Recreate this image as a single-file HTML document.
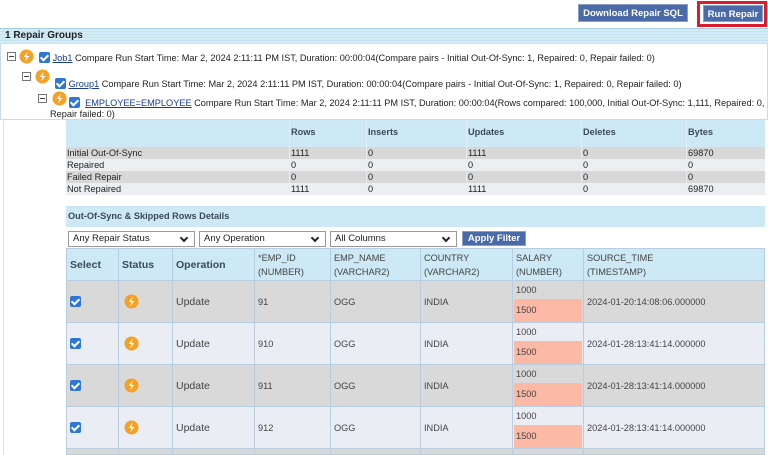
<!DOCTYPE html>
<html><head><meta charset="utf-8">
<style>
*{box-sizing:border-box;margin:0;padding:0}
body{width:768px;height:455px;background:#fff;font-family:"Liberation Sans",Tahoma,sans-serif;font-size:9.2px;color:#222;position:relative;overflow:hidden}
.a{position:absolute;white-space:nowrap}
.btn{position:absolute;background:#4a6aa8;color:#fff;font-weight:bold;font-size:9.5px;text-align:center;line-height:17px;border:1px solid #8aa0c8}
.band{position:absolute;background:repeating-linear-gradient(#d4ecf6 0 2px,#c4e2f0 2px 3px)}
a{color:#1a3c8c;text-decoration:underline}
.cb{display:inline-block;width:11px;height:11px;background:#2f77d6;border-radius:2px;position:relative;vertical-align:-2px}
.cb:after{content:"";position:absolute;left:3px;top:1px;width:3px;height:6px;border:solid #fff;border-width:0 2px 2px 0;transform:rotate(45deg)}
.pm{position:absolute;width:9px;height:9px;border:1px solid #777;background:#fff}
.pm:after{content:"";position:absolute;left:1px;top:3px;width:5px;height:1px;background:#444}
table{border-collapse:collapse}
.g td{border:1px solid #b8cde0;padding:0 3px;font-size:9.2px;color:#444;vertical-align:middle}
.sel{position:absolute;height:16px;border:1px solid #999;background:#fff;font-size:9.5px;line-height:14px;padding-left:4px}
.sel:after{content:"";position:absolute;right:7px;top:3px;width:4px;height:4px;border:solid #222;border-width:0 2px 2px 0;transform:rotate(45deg)}
</style></head><body>
<svg width="0" height="0" style="position:absolute"><defs><symbol id="ic" viewBox="0 0 16 16"><circle cx="8" cy="8" r="7.5" fill="#f4a124"/><path d="M9.5 2.5 L5 8.5 H8 L6.5 13.5 L11 7.5 H8 Z" fill="#fff"/></symbol></defs></svg>

<div class="btn" style="left:578px;top:4px;width:110px;height:18px">Download Repair SQL</div>
<div class="a" style="left:697px;top:1px;width:70px;height:26px;border:3px solid #d81e2c"></div>
<div class="btn" style="left:703px;top:5px;width:60px;height:17px">Run Repair</div>

<div class="band" style="left:0;top:28px;width:768px;height:16px;border-top:1px solid #a9cde0"></div>
<div class="a" style="left:5px;top:30px;font-weight:bold;font-size:10px">1 Repair Groups</div>
<div class="a" style="left:0;top:44px;width:768px;height:76px;border:1px solid #c8dbe8;border-top:none"></div>
<div class="a" style="left:3px;top:120px;width:1px;height:335px;background:#e2e2e2"></div>

<div class="pm" style="left:7px;top:52px"></div>
<svg class="a" style="left:19px;top:49px" width="15" height="15"><use href="#ic"/></svg>
<div class="a" style="left:39px;top:52px"><span class="cb"></span> <a>Job1</a> Compare Run Start Time: Mar 2, 2024 2:11:11 PM IST, Duration: 00:00:04(Compare pairs - Initial Out-Of-Sync: 1, Repaired: 0, Repair failed: 0)</div>

<div class="pm" style="left:22px;top:72px"></div>
<svg class="a" style="left:35px;top:69px" width="15" height="15"><use href="#ic"/></svg>
<div class="a" style="left:55px;top:78px"><span class="cb"></span> <a>Group1</a> Compare Run Start Time: Mar 2, 2024 2:11:11 PM IST, Duration: 00:00:04(Compare pairs - Initial Out-Of-Sync: 1, Repaired: 0, Repair failed: 0)</div>

<div class="pm" style="left:38px;top:94px"></div>
<svg class="a" style="left:52px;top:91px" width="15" height="15"><use href="#ic"/></svg>
<div class="a" style="left:69px;top:97px"><span class="cb"></span> &nbsp;<a>EMPLOYEE=EMPLOYEE</a> Compare Run Start Time: Mar 2, 2024 2:11:11 PM IST, Duration: 00:00:04(Rows compared: 100,000, Initial Out-Of-Sync: 1,111, Repaired: 0,</div>
<div class="a" style="left:50px;top:109px">Repair failed: 0)</div>

<div class="a" style="left:66px;top:120px;width:699px;height:27px;background:#cde9f5"></div>
<div class="a" style="left:66px;top:147px;width:699px;height:48px;border-bottom:1px solid #ddd"></div>
<div class="a" style="left:66px;top:147px;width:699px;height:12px;background:#d8d8d8"></div>
<div class="a" style="left:66px;top:159px;width:699px;height:12px;background:#eceef2"></div>
<div class="a" style="left:66px;top:171px;width:699px;height:12px;background:#d8d8d8"></div>
<div class="a" style="left:66px;top:183px;width:699px;height:12px;background:#eceef2"></div>
<div class="a" style="left:289px;top:120px;width:1px;height:75px;background:#e6eef4"></div>
<div class="a" style="left:366px;top:120px;width:1px;height:75px;background:#e6eef4"></div>
<div class="a" style="left:466px;top:120px;width:1px;height:75px;background:#e6eef4"></div>
<div class="a" style="left:581px;top:120px;width:1px;height:75px;background:#e6eef4"></div>
<div class="a" style="left:686px;top:120px;width:1px;height:75px;background:#e6eef4"></div>
<div class="a" style="left:291px;top:127px;font-weight:bold;color:#3a4a5a">Rows</div>
<div class="a" style="left:368px;top:127px;font-weight:bold;color:#3a4a5a">Inserts</div>
<div class="a" style="left:468px;top:127px;font-weight:bold;color:#3a4a5a">Updates</div>
<div class="a" style="left:583px;top:127px;font-weight:bold;color:#3a4a5a">Deletes</div>
<div class="a" style="left:688px;top:127px;font-weight:bold;color:#3a4a5a">Bytes</div>
<div class="a" style="left:67px;top:147px;line-height:12px">Initial Out-Of-Sync<br>Repaired<br>Failed Repair<br>Not Repaired</div>
<div class="a" style="left:291px;top:147px;line-height:12px">1111<br>0<br>0<br>1111</div>
<div class="a" style="left:368px;top:147px;line-height:12px">0<br>0<br>0<br>0</div>
<div class="a" style="left:468px;top:147px;line-height:12px">1111<br>0<br>0<br>1111</div>
<div class="a" style="left:583px;top:147px;line-height:12px">0<br>0<br>0<br>0</div>
<div class="a" style="left:688px;top:147px;line-height:12px">69870<br>0<br>0<br>69870</div>

<div class="a" style="left:66px;top:206px;width:699px;height:21px;background:#cde9f5"></div>
<div class="a" style="left:68px;top:211px;font-weight:bold;color:#3a4a5a">Out-Of-Sync &amp; Skipped Rows Details</div>
<div class="sel" style="left:68px;top:231px;width:127px">Any Repair Status</div>
<div class="sel" style="left:199px;top:231px;width:127px">Any Operation</div>
<div class="sel" style="left:330px;top:231px;width:127px">All Columns</div>
<div class="btn" style="left:462px;top:231px;width:64px;height:15px;line-height:13px">Apply Filter</div>

<table class="g a" style="left:66px;top:248px;width:699px">
<tr style="height:32px;background:#cde9f5">
<td style="width:52px;font-weight:bold;font-size:10.5px;color:#3a4a5a">Select</td>
<td style="width:54px;font-weight:bold;font-size:10.5px;color:#3a4a5a">Status</td>
<td style="width:82px;font-weight:bold;font-size:10.5px;color:#3a4a5a">Operation</td>
<td style="width:76px;line-height:14px">*EMP_ID<br>(NUMBER)</td>
<td style="width:90px;line-height:14px">EMP_NAME<br>(VARCHAR2)</td>
<td style="width:92px;line-height:14px">COUNTRY<br>(VARCHAR2)</td>
<td style="width:71px;line-height:14px">SALARY<br>(NUMBER)</td>
<td style="line-height:14px">SOURCE_TIME<br>(TIMESTAMP)</td></tr>
<tr style="height:42px;background:#d9d9d9"><td><span class="cb"></span></td><td><svg width="15" height="15" style="margin-left:2px;vertical-align:middle"><use href="#ic"/></svg></td><td style="font-size:10.5px">Update</td><td>91</td><td>OGG</td><td>INDIA</td><td style="padding:0 1px"><div style="padding-left:2px;line-height:17px">1000</div><div style="background:#fbb9a6;height:23px;line-height:23px;padding-left:2px">1500</div></td><td>2024-01-20:14:08:06.000000</td></tr>
<tr style="height:42px;background:#eaeef4"><td><span class="cb"></span></td><td><svg width="15" height="15" style="margin-left:2px;vertical-align:middle"><use href="#ic"/></svg></td><td style="font-size:10.5px">Update</td><td>910</td><td>OGG</td><td>INDIA</td><td style="padding:0 1px"><div style="padding-left:2px;line-height:17px">1000</div><div style="background:#fbb9a6;height:23px;line-height:23px;padding-left:2px">1500</div></td><td>2024-01-28:13:41:14.000000</td></tr>
<tr style="height:42px;background:#d9d9d9"><td><span class="cb"></span></td><td><svg width="15" height="15" style="margin-left:2px;vertical-align:middle"><use href="#ic"/></svg></td><td style="font-size:10.5px">Update</td><td>911</td><td>OGG</td><td>INDIA</td><td style="padding:0 1px"><div style="padding-left:2px;line-height:17px">1000</div><div style="background:#fbb9a6;height:23px;line-height:23px;padding-left:2px">1500</div></td><td>2024-01-28:13:41:14.000000</td></tr>
<tr style="height:42px;background:#eaeef4"><td><span class="cb"></span></td><td><svg width="15" height="15" style="margin-left:2px;vertical-align:middle"><use href="#ic"/></svg></td><td style="font-size:10.5px">Update</td><td>912</td><td>OGG</td><td>INDIA</td><td style="padding:0 1px"><div style="padding-left:2px;line-height:17px">1000</div><div style="background:#fbb9a6;height:23px;line-height:23px;padding-left:2px">1500</div></td><td>2024-01-28:13:41:14.000000</td></tr>
<tr style="height:6px;background:#d9d9d9"><td></td><td></td><td></td><td></td><td></td><td></td><td></td><td></td></tr>
</table>
</body></html>
